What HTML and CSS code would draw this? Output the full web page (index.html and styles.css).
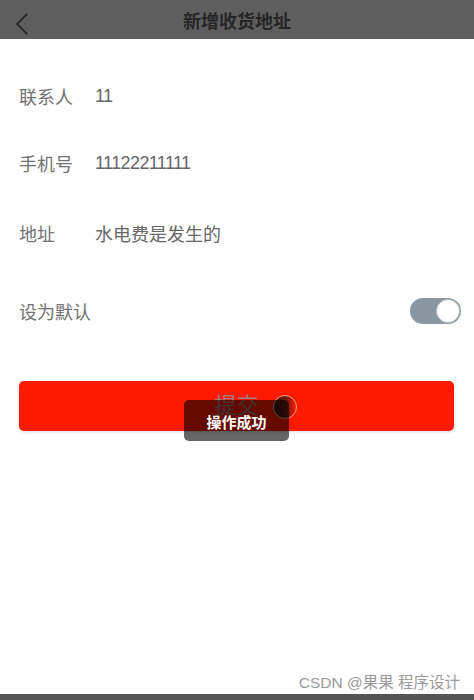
FILE: index.html
```html
<!DOCTYPE html>
<html lang="zh-CN">

<head>
    <meta charset="UTF-8">
    <meta name="viewport" content="width=device-width, initial-scale=1.0">
    <title>新增收货地址</title>
    <link rel="stylesheet" href="styles.css">
</head>

<body>
    <header class="nav-bar">
        <span class="nav-back">
            <svg width="14" height="24" viewBox="0 0 14 24">
                <polyline points="12,2 2,12 12,22" fill="none" stroke="#1f1f1f" stroke-width="1.6" />
            </svg>
        </span>
        <h1>新增收货地址</h1>
    </header>

    <div class="form">
        <div class="form-row row-name">
            <label>联系人</label>
            <span class="value num">11</span>
        </div>
        <div class="form-row row-phone">
            <label>手机号</label>
            <span class="value num">11122211111</span>
        </div>
        <div class="form-row row-address">
            <label>地址</label>
            <span class="value">水电费是发生的</span>
        </div>
        <div class="form-row row-default">
            <label>设为默认</label>
            <span class="switch on"><span class="knob"></span></span>
        </div>

        <div class="submit-wrap">
            <button class="submit-btn">提交</button>
            <span class="spinner"></span>
        </div>
    </div>

    <!-- toast shown after saving -->
    <div class="toast">操作成功</div>

    <div class="watermark">CSDN @果果 程序设计</div>
    <div class="bottom-bar"></div>
</body>

</html>
```

FILE: styles.css
```css
body {
    font-family: 'Liberation Sans', 'Noto Sans CJK SC', sans-serif;
    margin: 0;
    padding: 0;
    background-color: #fff;
    color: #666;
    width: 474px;
    height: 700px;
    position: relative;
    overflow: hidden;
}

.nav-bar {
    height: 39px;
    background-color: #5f5e5f;
    display: flex;
    align-items: center;
    justify-content: center;
    position: relative;
}

.nav-bar h1 {
    margin: 0;
    font-size: 18px;
    font-weight: bold;
    color: #262626;
}

.nav-back {
    position: absolute;
    left: 15px;
    top: 12px;
    display: flex;
}

.form {
    padding: 23px 20px 0 19px;
}

.form-row {
    display: flex;
    align-items: center;
    font-size: 18px;
}

.form-row label {
    width: 76px;
    color: #727272;
}

.form-row .value {
    color: #666;
}

.form-row .num {
    letter-spacing: -0.6px;
}

.row-name {
    height: 68px;
}

.row-phone {
    height: 66px;
}

.row-address {
    height: 74px;
}

.row-default {
    height: 82px;
    justify-content: space-between;
}

.switch {
    width: 51px;
    height: 26px;
    border-radius: 13px;
    background-color: #8a96a1;
    position: relative;
    margin-right: -7px;
}

.switch .knob {
    position: absolute;
    right: 1px;
    top: 1px;
    width: 22px;
    height: 22px;
    border-radius: 50%;
    background-color: #fff;
    border: 1px solid #b8bec4;
}

.submit-wrap {
    margin-top: 29px;
    position: relative;
}

.submit-btn {
    width: 435px;
    height: 50px;
    border: none;
    border-radius: 5px;
    background-color: #ff1a00;
    color: #9b7f85;
    font-family: inherit;
    font-size: 22px;
    padding: 0 0 7px;
    box-shadow: 0 1px 3px rgba(0, 0, 0, 0.15);
}

.spinner {
    position: absolute;
    left: 254px;
    top: 14px;
    width: 22px;
    height: 22px;
    border-radius: 50%;
    border: 1px solid #f4a08a;
    background: linear-gradient(90deg, #3a1410 0%, #6a1a12 55%, #ff1a00 100%);
}

.toast {
    position: absolute;
    left: 184px;
    top: 400px;
    width: 105px;
    height: 41px;
    box-sizing: border-box;
    padding-top: 11px;
    border-radius: 5px;
    background-color: rgba(0, 0, 0, 0.6);
    color: #fff;
    font-size: 15px;
    font-weight: bold;
    text-align: center;
}

.watermark {
    position: absolute;
    right: 14px;
    bottom: 8px;
    font-size: 15.5px;
    color: #9a9a9a;
}

.bottom-bar {
    position: absolute;
    left: 0;
    bottom: 0;
    width: 100%;
    height: 6px;
    background-color: #555;
}
```
